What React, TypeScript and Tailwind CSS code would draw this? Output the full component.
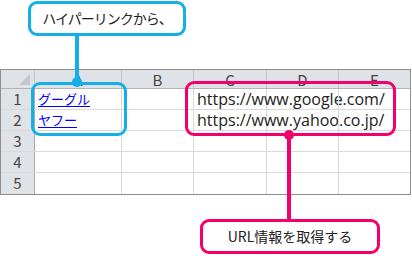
const cols = ["", "A", "B", "C", "D", "E"];
const widths = ["w-[34px]", "w-[87px]", "w-[72px]", "w-[73px]", "w-[72px]", "w-[71px]"];

const rows: { a?: string; c?: string }[] = [
  { a: "グーグル", c: "https://www.google.com/" },
  { a: "ヤフー", c: "https://www.yahoo.co.jp/" },
  {},
  {},
  {},
];

function Sheet() {
  return (
    <div className="w-[411px] border border-[#8e8e8e] bg-white">
      <div className="flex h-[19px] border-b border-[#b4b4b4] bg-[#dfe2e6]">
        <div className="flex w-[34px] shrink-0 items-end justify-end border-r border-[#c4c4c4] pb-[3px] pr-[4px]">
          <span className="h-0 w-0 border-b-[11px] border-l-[11px] border-b-[#c3c6ca] border-l-transparent" />
        </div>
        {cols.slice(1).map((c, i) => (
          <div
            key={c}
            className={`${widths[i + 1]} flex shrink-0 items-center justify-center border-r border-[#c4c4c4] text-[15px] leading-none text-[#444] last:border-r-0`}
          >
            {c}
          </div>
        ))}
      </div>
      {rows.map((r, ri) => (
        <div key={ri} className="flex h-[21px] border-b border-[#dadada] last:border-b-0">
          <div className="flex w-[34px] shrink-0 items-center justify-center border-r border-[#aaaaaa] bg-[#dfe2e6] text-[15px] text-[#444]">
            {ri + 1}
          </div>
          <div className="flex w-[87px] shrink-0 items-center border-r border-[#dadada] pl-[3px] text-[13px] text-[#0000ff] underline underline-offset-2">
            {r.a}
          </div>
          <div className="w-[72px] shrink-0 border-r border-[#dadada]" />
          <div className="w-[73px] shrink-0 overflow-visible whitespace-nowrap border-r border-[#dadada] pl-[3px] font-['Open_Sans',sans-serif] text-[16px] leading-[20px] text-[#222]">
            {r.c}
          </div>
          <div className="w-[72px] shrink-0 border-r border-[#dadada]" />
          <div className="w-[71px] shrink-0" />
        </div>
      ))}
    </div>
  );
}

export default function App() {
  return (
    <div className="relative h-[256px] w-[412px] overflow-hidden bg-white font-['Noto_Sans_CJK_JP',sans-serif]">
      <div className="h-[69px] pl-[28px] pt-[1px]">
        <div className="flex h-[35px] w-[158px] items-center justify-center rounded-[9px] border-[3px] border-[#14afe8] bg-white text-[14px] tracking-[-1px] text-[#222]">
          ハイパーリンクから、
        </div>
      </div>
      <Sheet />
      <div className="pl-[200px] pt-[24px]">
        <div className="flex h-[35px] w-[180px] items-center justify-center rounded-[9px] border-[3px] border-[#f5006a] bg-white text-[14px] text-[#222]">
          URL情報を取得する
        </div>
      </div>

      {/* highlight boxes and connectors drawn over the sheet */}
      <div className="absolute left-[31px] top-[82px] h-[54px] w-[96px] rounded-[9px] border-[3px] border-[#14afe8]" />
      <div className="absolute left-[75px] top-[35px] h-[47px] w-[4px] bg-[#14afe8]" />
      <div className="absolute left-[72px] top-[77px] h-[10px] w-[10px] rounded-full bg-[#14afe8]" />

      <div className="absolute left-[185px] top-[81px] h-[55px] w-[211px] rounded-[9px] border-[3px] border-[#f5006a]" />
      <div className="absolute left-[287px] top-[135px] h-[85px] w-[4px] bg-[#f5006a]" />
      <div className="absolute left-[284px] top-[130px] h-[10px] w-[10px] rounded-full bg-[#f5006a]" />
    </div>
  );
}
